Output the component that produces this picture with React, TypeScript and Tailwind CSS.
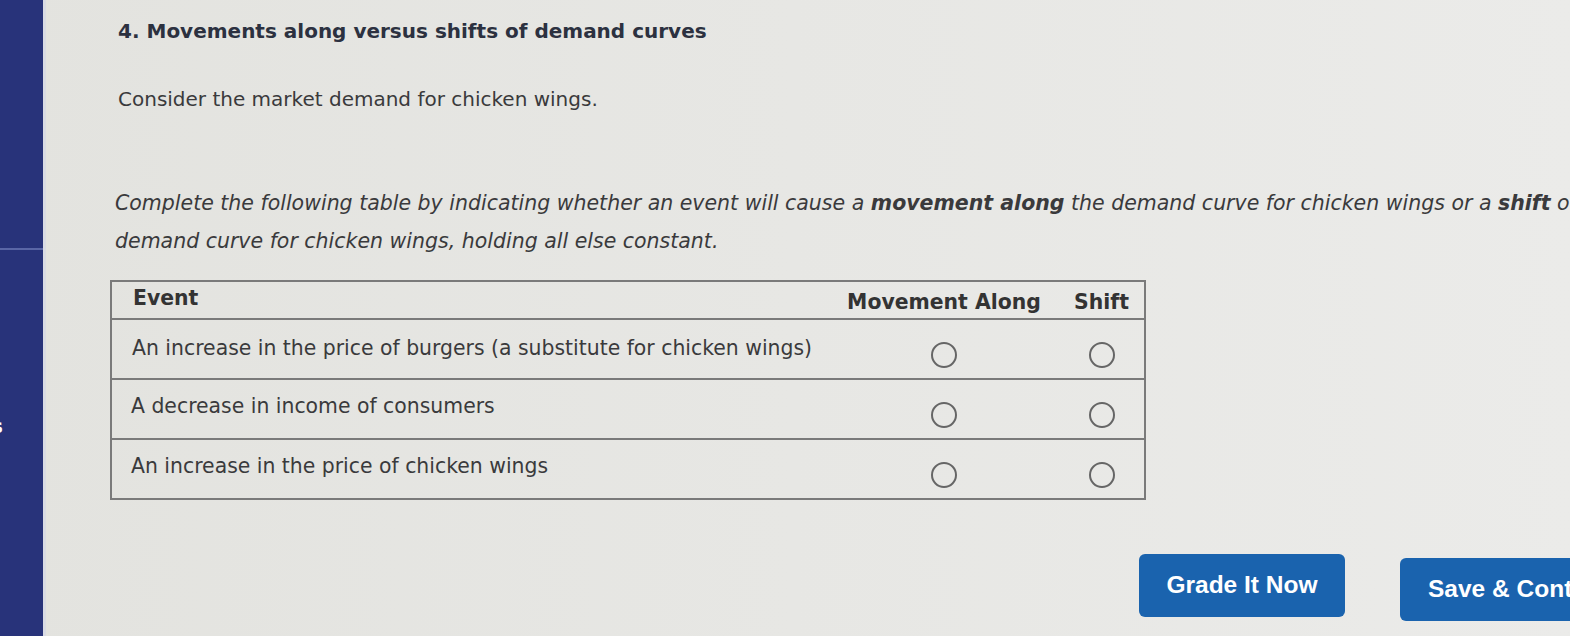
export default function App() {
  const rows = [
    "An increase in the price of burgers (a substitute for chicken wings)",
    "A decrease in income of consumers",
    "An increase in the price of chicken wings",
  ];

  return (
    <div className="w-[1570px] h-[636px] overflow-hidden flex bg-gradient-to-r from-[#e3e3df] to-[#ebebe9] font-['DejaVu_Sans',sans-serif] text-[#3a3a3c]">
      {/* left nav strip */}
      <div className="w-[46px] shrink-0 bg-[#28337a] flex flex-col border-r-[3px] border-[#d9dbe4]">
        <div className="h-[250px] border-b-2 border-[#5a66a6]" />
        <div className="mt-[166px] text-white text-[20px] font-bold leading-none -ml-[9px]">s</div>
      </div>

      <main className="flex-1 min-w-0 pl-[72px] pt-[18px]">
        <h1 className="text-[20px] font-bold text-[#2c3140] leading-[26px]">
          4. Movements along versus shifts of demand curves
        </h1>

        <p className="mt-[42px] text-[20px] leading-[26px]">Consider the market demand for chicken wings.</p>

        <div className="mt-[72px] -ml-[3px] text-[20.5px] italic leading-[38px]">
          <p className="whitespace-nowrap">
            Complete the following table by indicating whether an event will cause a{" "}
            <b>movement along</b> the demand curve for chicken wings or a <b>shift</b> of the
          </p>
          <p>demand curve for chicken wings, holding all else constant.</p>
        </div>

        <table className="mt-[20px] -ml-[8px] w-[1036px] border-collapse border-2 border-[#7a7a7a] text-[20.4px]">
          <thead>
            <tr className="h-[36px] border-b-2 border-[#7a7a7a]">
              <th className="text-left font-bold pl-[21px] align-top pt-[1px] text-[#333]">Event</th>
              <th className="w-[230px] text-center font-bold text-[#333] pt-[5px]">Movement Along</th>
              <th className="w-[86px] text-center font-bold text-[#333] pt-[5px]">Shift</th>
            </tr>
          </thead>
          <tbody>
            {rows.map((r, i) => (
              <tr key={r} className="h-[60px] border-b-2 border-[#7a7a7a]">
                <td className={i === 0 ? "pl-[20px]" : "pl-[19px] pb-[5px]"}>{r}</td>
                <td className="text-center pt-[12px]">
                  <span className="inline-block w-[26px] h-[26px] rounded-full border-2 border-[#666] align-middle" />
                </td>
                <td className="text-center pt-[12px]">
                  <span className="inline-block w-[26px] h-[26px] rounded-full border-2 border-[#666] align-middle" />
                </td>
              </tr>
            ))}
          </tbody>
        </table>

        <div className="mt-[54px] flex gap-[55px] pl-[1021px] font-['Liberation_Sans',Arial,sans-serif]">
          <button className="shrink-0 w-[206px] h-[63px] rounded-[6px] bg-[#1a63ae] text-white text-[24.5px] font-bold whitespace-nowrap">
            Grade It Now
          </button>
          <button className="shrink-0 w-[240px] h-[63px] mt-[4px] rounded-[6px] bg-[#1a63ae] text-white text-[24.5px] font-bold text-left pl-[28px] whitespace-nowrap">
            Save &amp; Continue
          </button>
        </div>
      </main>
    </div>
  );
}
